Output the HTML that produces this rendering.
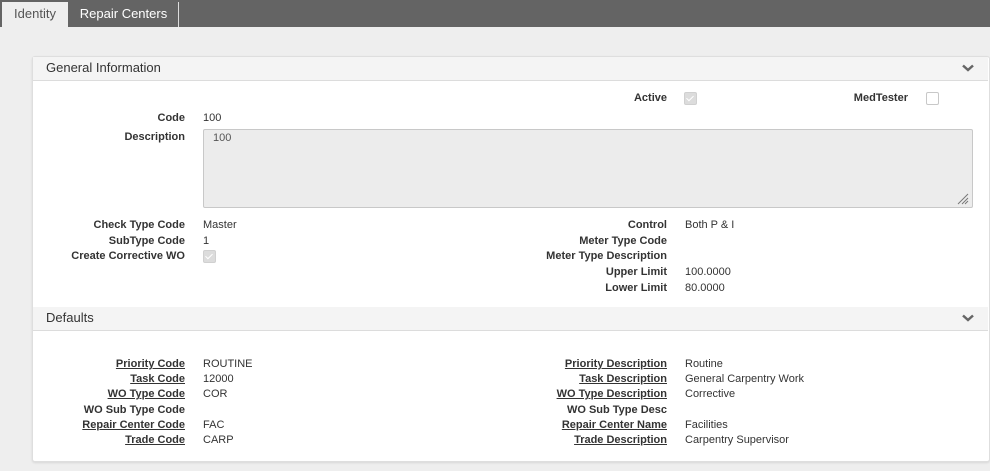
<!DOCTYPE html>
<html><head><style>
body{margin:0;width:990px;height:471px;background:#eeeeee;font-family:"Liberation Sans",Arial,sans-serif;position:relative;overflow:hidden;color:#333}
.a{position:absolute;white-space:nowrap}
.tabs{position:absolute;left:0;top:0;width:990px;height:27px;background:#646464}
.l{font-size:11px;font-weight:bold;text-align:right;color:#333}
.v{font-size:11px;color:#333}
.u{text-decoration:underline}
.cb{position:absolute;width:11px;height:11px;border:1px solid #c8c8c8;border-radius:2px;background:#fff}
.cb.on{background:#dcdcdc;border-color:#d0d0d0}
.cb.on::after{content:"";position:absolute;left:3px;top:1px;width:3px;height:6px;border:solid #fff;border-width:0 1.5px 1.5px 0;transform:rotate(45deg)}
.hdr{position:absolute;left:33px;width:955px;height:23px;background:#f4f4f4;border-bottom:1px solid #dcdcdc;font-size:13px;color:#333}
.chev{position:absolute;right:14px;top:7px}
</style></head><body>
<div class="tabs"></div>
<div class="a" style="left:2px;top:2px;width:66px;height:25px;background:#eeeeee;font-size:13px;color:#555;text-align:center;line-height:24px">Identity</div>
<div class="a" style="left:69px;top:2px;width:109px;height:25px;font-size:13px;color:#fff;text-align:center;line-height:24px;border-right:1px solid #ddd">Repair Centers</div>

<div class="a" style="left:32px;top:56px;width:956px;height:404px;background:#fff;border:1px solid #dedede;border-radius:3px;box-shadow:0 1px 2px rgba(0,0,0,.1)"></div>
<div class="hdr" style="top:57px"><span class="a" style="left:13px;top:3px">General Information</span>
<svg class="chev" width="12" height="8" viewBox="0 0 12 8"><path d="M1 1.5L6 6L11 1.5" stroke="#666" stroke-width="2.5" fill="none"/></svg></div>

<div class="a l" style="right:323px;top:92px">Active</div>
<div class="cb on" style="left:684px;top:92px"></div>
<div class="a l" style="right:82px;top:92px">MedTester</div>
<div class="cb" style="left:926px;top:92px"></div>

<div class="a l" style="right:805px;top:112px">Code</div>
<div class="a v" style="left:203px;top:112px">100</div>
<div class="a l" style="right:805px;top:131px">Description</div>
<div class="a" style="left:203px;top:129px;width:768px;height:77px;background:#ececec;border:1px solid #c8c8c8;border-radius:2px"></div>
<div class="a v" style="left:213px;top:132px;color:#555">100</div>
<svg class="a" style="left:955px;top:192px" width="14" height="13"><path d="M3 12L13 2M7 12L13 6M10 12L13 9" stroke="#777" stroke-width="1"/></svg>

<div class="a l" style="right:805px;top:219px">Check Type Code</div><div class="a v" style="left:203px;top:219px">Master</div>
<div class="a l" style="right:805px;top:235px">SubType Code</div><div class="a v" style="left:203px;top:235px">1</div>
<div class="a l" style="right:805px;top:250px">Create Corrective WO</div><div class="cb on" style="left:203px;top:250px"></div>

<div class="a l" style="right:323px;top:219px">Control</div><div class="a v" style="left:685px;top:219px">Both P &amp; I</div>
<div class="a l" style="right:323px;top:235px">Meter Type Code</div>
<div class="a l" style="right:323px;top:250px">Meter Type Description</div>
<div class="a l" style="right:323px;top:266px">Upper Limit</div><div class="a v" style="left:685px;top:266px">100.0000</div>
<div class="a l" style="right:323px;top:282px">Lower Limit</div><div class="a v" style="left:685px;top:282px">80.0000</div>

<div class="hdr" style="top:307px"><span class="a" style="left:13px;top:3px">Defaults</span>
<svg class="chev" width="12" height="8" viewBox="0 0 12 8"><path d="M1 1.5L6 6L11 1.5" stroke="#666" stroke-width="2.5" fill="none"/></svg></div>

<div class="a l u" style="right:805px;top:358px">Priority Code</div><div class="a v" style="left:203px;top:358px">ROUTINE</div>
<div class="a l u" style="right:805px;top:373px">Task Code</div><div class="a v" style="left:203px;top:373px">12000</div>
<div class="a l u" style="right:805px;top:388px">WO Type Code</div><div class="a v" style="left:203px;top:388px">COR</div>
<div class="a l" style="right:805px;top:404px">WO Sub Type Code</div>
<div class="a l u" style="right:805px;top:419px">Repair Center Code</div><div class="a v" style="left:203px;top:419px">FAC</div>
<div class="a l u" style="right:805px;top:434px">Trade Code</div><div class="a v" style="left:203px;top:434px">CARP</div>

<div class="a l u" style="right:323px;top:358px">Priority Description</div><div class="a v" style="left:685px;top:358px">Routine</div>
<div class="a l u" style="right:323px;top:373px">Task Description</div><div class="a v" style="left:685px;top:373px">General Carpentry Work</div>
<div class="a l u" style="right:323px;top:388px">WO Type Description</div><div class="a v" style="left:685px;top:388px">Corrective</div>
<div class="a l" style="right:323px;top:404px">WO Sub Type Desc</div>
<div class="a l u" style="right:323px;top:419px">Repair Center Name</div><div class="a v" style="left:685px;top:419px">Facilities</div>
<div class="a l u" style="right:323px;top:434px">Trade Description</div><div class="a v" style="left:685px;top:434px">Carpentry Supervisor</div>
</body></html>
